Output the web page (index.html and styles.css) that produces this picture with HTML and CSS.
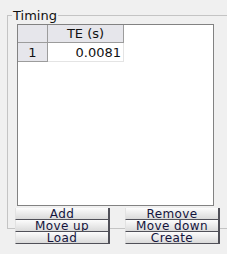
FILE: index.html
```html
<!DOCTYPE html>
<html lang="en">
<head>
  <meta charset="UTF-8">
  <title>Timing</title>
  <link rel="stylesheet" href="styles.css">
</head>
<body>
  <fieldset class="group">
    <legend>Timing</legend>
    <div class="table-box">
      <table class="grid">
        <tr>
          <th class="corner"></th>
          <th class="col">TE (s)</th>
        </tr>
        <tr>
          <th class="rowhead">1</th>
          <td class="cell">0.0081</td>
        </tr>
      </table>
    </div>
    <div class="buttons">
      <button>Add</button>
      <button>Remove</button>
      <button>Move up</button>
      <button>Move down</button>
      <button>Load</button>
      <button>Create</button>
    </div>
  </fieldset>
</body>
</html>
```

FILE: styles.css
```css
html, body { margin: 0; padding: 0; background: #f0f0f0; overflow: hidden; }
body { font-family: "DejaVu Sans", sans-serif; font-size: 13px; color: #111; width: 227px; height: 254px; }
.group { margin: 8px 0 0 7px; width: 225px; height: 221px; border: 1px solid #c4c4c4; border-right: none; padding: 0 0 0 9px; box-sizing: border-box; }
.group legend { margin-left: -5px; padding: 0 1px; line-height: 15px; font-size: 13px; }
.table-box { margin-top: 1px; width: 197px; height: 182px; border: 1px solid #828282; background: #fff; box-sizing: border-box; }
.grid { border-collapse: collapse; }
.grid th, .grid td { padding: 0; font-weight: normal; font-size: 13px; }
.grid .corner, .grid .col, .grid .rowhead { background: #e6e6eb; border-right: 1px solid #9c9c9c; border-bottom: 1px solid #9c9c9c; }
.grid .corner { width: 29px; height: 17px; }
.grid .col { width: 75px; text-align: center; }
.grid .rowhead { height: 18px; text-align: center; }
.grid .cell { text-align: right; padding-right: 2px; border-right: 1px solid #e4e4e4; border-bottom: 1px solid #e4e4e4; }
.buttons { display: grid; grid-template-columns: 95px 95px; column-gap: 15px; margin: 2px 0 0 -2px; }
.buttons button { font-family: "DejaVu Sans", sans-serif; font-size: 12px; letter-spacing: 0.4px; color: #14143c; height: 12px; line-height: 10px; padding: 0; margin: 0; background: linear-gradient(#fcfcfc, #dadada); border: 1px solid; border-width: 0 2px 1px 1px; border-color: #f8f8f8 #505058 #505058 #e2e2e2; overflow: hidden; }
```
